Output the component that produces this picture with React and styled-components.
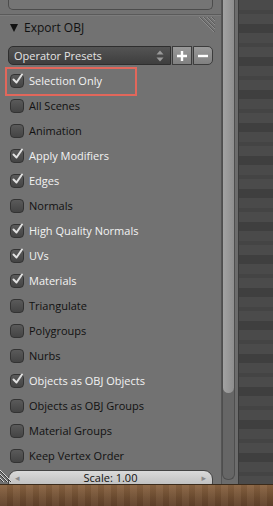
import styled, { createGlobalStyle } from 'styled-components'

const GlobalStyle = createGlobalStyle`
  html, body {
    margin: 0;
    padding: 0;
    background: #727272;
  }
  body {
    font-family: "Open Sans", "Noto Sans", "DejaVu Sans", sans-serif;
    overflow: hidden;
  }
`

const options = [
    { label: 'Selection Only', checked: true, highlight: true },
    { label: 'All Scenes', checked: false },
    { label: 'Animation', checked: false },
    { label: 'Apply Modifiers', checked: true },
    { label: 'Edges', checked: true },
    { label: 'Normals', checked: false },
    { label: 'High Quality Normals', checked: true },
    { label: 'UVs', checked: true },
    { label: 'Materials', checked: true },
    { label: 'Triangulate', checked: false },
    { label: 'Polygroups', checked: false },
    { label: 'Nurbs', checked: false },
    { label: 'Objects as OBJ Objects', checked: true },
    { label: 'Objects as OBJ Groups', checked: false },
    { label: 'Material Groups', checked: false },
    { label: 'Keep Vertex Order', checked: false },
]

const CheckMark = () => (
    <svg width="13" height="13" viewBox="0 0 13 13">
        <path d="M2.5 6.5 L5.5 9.5 L11 1.5" fill="none" stroke="#e2e2e2" strokeWidth="2" strokeLinecap="round" strokeLinejoin="round" />
    </svg>
)

const Grip = () => (
    <svg width="16" height="15" viewBox="0 0 16 15">
        <path d="M4 0 L16 12 M8 0 L16 8 M12 0 L16 4 M0 0 L15 15" stroke="#8c8c8c" strokeWidth="1" />
        <path d="M5 0 L16 11 M9 0 L16 7 M13 0 L16 3 M1 0 L16 15" stroke="#5c5c5c" strokeWidth="1" />
    </svg>
)

const CornerGrip = () => (
    <svg width="12" height="12" viewBox="0 0 12 12">
        <path d="M0 4 L8 12 M0 8 L4 12 M0 0 L12 12" stroke="#d8d8d8" strokeWidth="1" />
        <path d="M0 5 L7 12 M0 9 L3 12 M0 1 L11 12" stroke="#3a3a3a" strokeWidth="1" />
    </svg>
)

const App = () => {
    return (
        <Screen>
            <GlobalStyle />
            <Main>
                <Panel>
                    <TopStub />
                    <Header>
                        <Triangle />
                        <HeaderTitle>Export OBJ</HeaderTitle>
                        <GripSlot><Grip /></GripSlot>
                    </Header>
                    <PresetRow>
                        <PresetSelect>
                            <span>Operator Presets</span>
                            <UpDown>
                                <svg width="8" height="12" viewBox="0 0 8 12">
                                    <path d="M4 0.5 L7.5 4.5 H0.5 Z M4 11.5 L7.5 7.5 H0.5 Z" fill="#9a9a9a" />
                                </svg>
                            </UpDown>
                        </PresetSelect>
                        <PresetButton>
                            <svg width="12" height="12" viewBox="0 0 12 12">
                                <path d="M6 1 V11 M1 6 H11" stroke="#fff" strokeWidth="2.4" />
                            </svg>
                        </PresetButton>
                        <PresetButton $last>
                            <svg width="12" height="12" viewBox="0 0 12 12">
                                <path d="M1 6 H11" stroke="#fff" strokeWidth="2.4" />
                            </svg>
                        </PresetButton>
                    </PresetRow>
                    <OptionList>
                        {options.map((option) => (
                            <Row key={option.label} $highlight={option.highlight}>
                                <Box>{option.checked && <CheckMark />}</Box>
                                <Label $checked={option.checked}>{option.label}</Label>
                            </Row>
                        ))}
                    </OptionList>
                    <ScaleSlider>
                        <Arrow>◂</Arrow>
                        <span>Scale: 1.00</span>
                        <Arrow>▸</Arrow>
                    </ScaleSlider>
                    <CornerSlot><CornerGrip /></CornerSlot>
                </Panel>
                <ScrollColumn>
                    <Track>
                        <Thumb />
                    </Track>
                </ScrollColumn>
                <Divider />
                <DarkArea />
            </Main>
            <Wood />
        </Screen>
    )
}

const Screen = styled.div`
  width: 273px;
  height: 506px;
  display: flex;
  flex-direction: column;
  overflow: hidden;
`

const Main = styled.div`
  height: 484px;
  flex-shrink: 0;
  display: flex;
  overflow: hidden;
`

const Panel = styled.div`
  position: relative;
  width: 221px;
  flex-shrink: 0;
  background: #727272;
  display: flex;
  flex-direction: column;

  & > * {
    flex-shrink: 0;
  }
`

const TopStub = styled.div`
  height: 10px;
  margin: 0 8px;
  border: 1px solid #4c4c4c;
  border-top: none;
  border-radius: 0 0 5px 5px;
  background: #757575;
  box-sizing: border-box;
`

const Header = styled.div`
  margin-top: 4px;
  height: 24px;
  border-top: 1px solid #5a5a5a;
  box-shadow: inset 0 1px 0 #7c7c7c;
  display: flex;
  align-items: center;
  padding-left: 10px;
  gap: 6px;
  position: relative;
`

const Triangle = styled.div`
  width: 0;
  height: 0;
  border-left: 4.5px solid transparent;
  border-right: 4.5px solid transparent;
  border-top: 8px solid #111;
  margin-top: 1px;
`

const HeaderTitle = styled.span`
  font-size: 12px;
  color: #111;
  margin-top: 1px;
`

const GripSlot = styled.div`
  position: absolute;
  right: 6px;
  top: 2px;
  display: flex;
`

const PresetRow = styled.div`
  margin: 7px 8px 0;
  height: 19px;
  display: flex;
  gap: 1px;
`

const PresetSelect = styled.div`
  flex: 1;
  display: flex;
  align-items: center;
  justify-content: space-between;
  padding: 0 6px 0 5px;
  background: linear-gradient(#545454, #3e3e3e);
  border: 1px solid #2e2e2e;
  border-radius: 5px 0 0 5px;
  color: #e4e4e4;
  font-size: 11px;
  box-sizing: border-box;
`

const UpDown = styled.div`
  display: flex;
  align-items: center;
`

const PresetButton = styled.div`
  width: 20px;
  display: flex;
  align-items: center;
  justify-content: center;
  background: linear-gradient(#9a9a9a, #808080);
  border: 1px solid #3c3c3c;
  border-radius: ${(p) => (p.$last ? '0 5px 5px 0' : '0')};
  box-sizing: border-box;
`

const OptionList = styled.div`
  margin-top: 3px;
  display: flex;
  flex-direction: column;
`

const Row = styled.div`
  position: relative;
  height: 25px;
  display: flex;
  align-items: center;
  gap: 5px;
  padding-left: 10px;

  ${(p) => p.$highlight && `
    &::after {
      content: '';
      position: absolute;
      left: 5px;
      top: -1px;
      width: 132px;
      height: 29px;
      border: 2px solid #e2675b;
      box-sizing: border-box;
    }
  `}
`

const Box = styled.div`
  width: 14px;
  height: 14px;
  border-radius: 4px;
  background: linear-gradient(#5a5a5a, #444);
  border: 1px solid #333;
  box-sizing: border-box;
  display: flex;
  align-items: center;
  justify-content: center;
  overflow: visible;

  svg {
    flex-shrink: 0;
    margin: -2px -1px 0 0;
  }
`

const Label = styled.span`
  font-size: 11px;
  color: ${(p) => (p.$checked ? '#f2f2f2' : '#111')};
`

const ScaleSlider = styled.div`
  margin: 2px 8px 0;
  height: 22px;
  display: flex;
  align-items: flex-start;
  justify-content: space-between;
  padding: 1px 6px 0;
  border: 1px solid #444;
  border-radius: 9px;
  background: linear-gradient(#dadada, #b4b4b4);
  font-size: 11px;
  line-height: 12px;
  color: #111;
  box-sizing: border-box;
`

const Arrow = styled.span`
  color: #8a8a8a;
  font-size: 9px;
  line-height: 12px;
`

const CornerSlot = styled.div`
  position: absolute;
  left: 0;
  bottom: 2px;
  display: flex;
`

const ScrollColumn = styled.div`
  width: 17px;
  flex-shrink: 0;
  background: #6c6c6c;
  border-left: 1px solid #555;
  box-sizing: border-box;
  padding: 0 3px 2px 0;
  display: flex;
`

const Track = styled.div`
  flex: 1;
  margin-bottom: 2px;
  border: 1px solid #4e4e4e;
  border-top: none;
  border-radius: 0 0 6px 6px;
  background: #666;
  display: flex;
  flex-direction: column;
`

const Thumb = styled.div`
  height: 393px;
  background: linear-gradient(90deg, #a2a2a2, #8e8e8e);
  border-radius: 0 0 6px 6px;
`

const Divider = styled.div`
  width: 1px;
  flex-shrink: 0;
  background: #3a3a3a;
`

const DarkArea = styled.div`
  flex: 1;
  background: repeating-linear-gradient(
    #4a4a4a 0px, #4a4a4a 10px,
    #444 10px, #444 14px,
    #4b4b4b 14px, #4b4b4b 24px,
    #3f3f3f 24px, #3f3f3f 33px
  );
`

const Wood = styled.div`
  height: 22px;
  flex-shrink: 0;
  border-top: 1px solid #3a2a1a;
  background:
    repeating-linear-gradient(90deg, rgba(255,255,255,0.04) 0 7px, rgba(0,0,0,0.05) 7px 13px),
    linear-gradient(#8a6442, #6e4d31 60%, #5e4029);
`

export default App
